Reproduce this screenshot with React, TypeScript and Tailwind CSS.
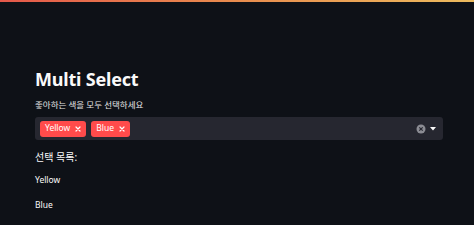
import React from "react";

function Tag({ label }: { label: string }) {
  return (
    <span className="flex h-[16px] items-center gap-[5px] rounded-[3px] bg-[#ff4b4b] pl-[5px] pr-[5px] text-[8.5px] leading-none text-white">
      <span>{label}</span>
      <svg width="6" height="6" viewBox="0 0 6 6" className="mt-[1px]">
        <path d="M1 1L5 5M5 1L1 5" stroke="white" strokeWidth="1.2" strokeLinecap="round" />
      </svg>
    </span>
  );
}

export default function App() {
  return (
    <div
      className="h-[225px] w-[474px] overflow-hidden bg-[#0e1117] text-[#fafafa]"
      style={{ fontFamily: '"Noto Sans", "Noto Sans CJK KR", sans-serif' }}
    >
      <div className="h-[2px] w-full bg-gradient-to-r from-[#e4584a] via-[#e88c4e] to-[#ecbb5e]" />
      <div className="pl-[35px] pr-[31px]">
        <h1 className="mt-[65px] text-[18px] font-bold leading-[24px] tracking-[-0.2px]">Multi Select</h1>
        <div className="mt-[8px] text-[8.5px] leading-[12px] text-[#e6e6e6]">좋아하는 색을 모두 선택하세요</div>
        <div className="mt-[6px] flex h-[23px] w-[408px] items-center rounded-[3px] bg-[#262730] pl-[5px] pr-[7px]">
          <div className="flex flex-1 items-center gap-[5px]">
            <Tag label="Yellow" />
            <Tag label="Blue" />
          </div>
          <svg width="10" height="10" viewBox="0 0 10 10">
            <circle cx="5" cy="5" r="4.5" fill="#8b8c93" />
            <path d="M3.3 3.3L6.7 6.7M6.7 3.3L3.3 6.7" stroke="#262730" strokeWidth="1.2" />
          </svg>
          <svg width="6" height="4" viewBox="0 0 6 4" className="ml-[4px]">
            <path d="M0 0H6L3 3.5Z" fill="#fafafa" />
          </svg>
        </div>
        <div className="mt-[10px] text-[10px] leading-[14px]">선택 목록:</div>
        <div className="mt-[10px] text-[8.5px] leading-[12px]">Yellow</div>
        <div className="mt-[13px] text-[8.5px] leading-[12px]">Blue</div>
      </div>
    </div>
  );
}
